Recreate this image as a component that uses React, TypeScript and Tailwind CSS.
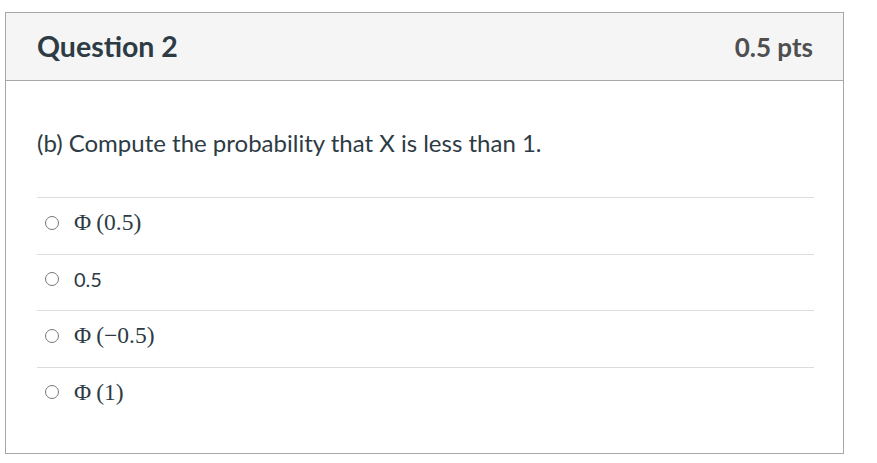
import React from 'react';

const options = [
  { id: 'a', math: true, label: 'Φ', arg: '(0.5)' },
  { id: 'b', math: false, label: '0.5', arg: '' },
  { id: 'c', math: true, label: 'Φ', arg: '(−0.5)' },
  { id: 'd', math: true, label: 'Φ', arg: '(1)' },
];

export default function App() {
  return (
    <div className="w-[877px] h-[463px] bg-white pt-3 pl-[5px]" style={{ fontFamily: 'Lato, "Open Sans", sans-serif' }}>
      <div className="w-[839px] h-[442px] border border-[#a7a7a7] flex flex-col">
        {/* Header */}
        <div className="h-[68px] bg-[#f5f5f5] border-b border-[#a7a7a7] flex items-center justify-between pl-[31px] pr-[30px]">
          <h2 className="text-[28.5px] font-bold text-[#2d3b45] leading-none">Question 2</h2>
          <span className="text-[26px] font-bold text-[#4f4f4f] leading-none">0.5 pts</span>
        </div>

        {/* Body */}
        <div className="pl-[31px] pr-[29px]">
          <p className="text-[24px] text-[#2d3b45] mt-[47px] leading-[30px]">
            (b) Compute the probability that X is less than 1.
          </p>

          <div className="mt-[39px]">
            {options.map(opt => (
              <label
                key={opt.id}
                className="flex items-center h-[56.5px] border-t border-[#dcdcdc] pl-[8px] pb-[6px]"
              >
                <span className="w-[14px] h-[14px] rounded-full border-[1.5px] border-[#777777] bg-white shrink-0" />
                {opt.math ? (
                  <span
                    className="ml-[15px] text-[23.5px] text-[#2d3b45] leading-none"
                    style={{ fontFamily: '"Liberation Serif", "DejaVu Serif", serif' }}
                  >
                    {opt.label}
                    <span className="ml-[5px]">{opt.arg}</span>
                  </span>
                ) : (
                  <span className="ml-[15px] text-[20px] text-[#2d3b45] leading-none">{opt.label}</span>
                )}
              </label>
            ))}
          </div>
        </div>
      </div>
    </div>
  );
}
